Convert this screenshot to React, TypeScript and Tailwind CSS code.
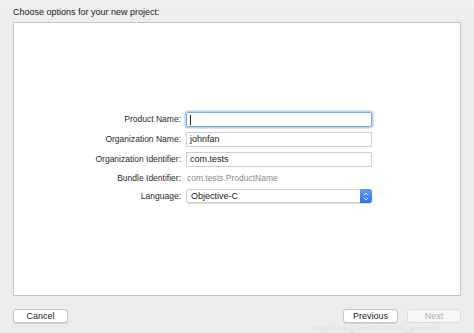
import React from "react";

const font = { fontFamily: '"Liberation Sans", Arial, sans-serif' };

function Label({ children }: { children: React.ReactNode }) {
  return (
    <div className="w-[167px] shrink-0 text-right text-[8.5px] leading-none text-[#2a2a2a]">
      {children}
    </div>
  );
}

export default function App() {
  return (
    <div
      className="relative flex h-[333px] w-[474px] flex-col overflow-hidden bg-[#ececec]"
      style={font}
    >
      <div className="h-[22px] px-[13px] pt-[8px] text-[9px] leading-none text-[#222] bg-gradient-to-b from-[#f0f0f0] to-[#ececec]">
        Choose options for your new project:
      </div>

      <div className="mx-[13px] h-[274px] border border-[#c4c4c4] bg-white">
        <div className="flex flex-col gap-[5px] pt-[89px]">
          <div className="flex h-[15px] items-center gap-[5px]">
            <Label>Product Name:</Label>
            <div className="flex h-[15px] w-[186px] items-center rounded-[2px] border border-[#7fa9e6] pl-[3px] shadow-[0_0_0_1.5px_#b7d0f3]">
              <div className="h-[10px] w-px bg-[#222]" />
            </div>
          </div>
          <div className="flex h-[15px] items-center gap-[5px]">
            <Label>Organization Name:</Label>
            <div className="flex h-[15px] w-[186px] items-center border border-[#cfcfcf] pl-[3px] text-[9px] leading-none text-[#222]">
              johnfan
            </div>
          </div>
          <div className="flex h-[15px] items-center gap-[5px]">
            <Label>Organization Identifier:</Label>
            <div className="flex h-[15px] w-[186px] items-center border border-[#cfcfcf] pl-[3px] text-[9px] leading-none text-[#222]">
              com.tests
            </div>
          </div>
          <div className="flex h-[12px] items-center gap-[5px]">
            <Label>Bundle Identifier:</Label>
            <div className="pl-[1px] text-[8.5px] leading-none text-[#8c8c8c]">
              com.tests.ProductName
            </div>
          </div>
          <div className="flex h-[14px] items-center gap-[5px]">
            <Label>Language:</Label>
            <div className="flex h-[14px] w-[186px] items-center justify-between rounded-[3px] border border-[#d0d0d0] bg-white pl-[4px] text-[9px] leading-none text-[#222] shadow-[0_1px_0_#e0e0e0]">
              <span>Objective-C</span>
              <div className="flex h-[14px] w-[12px] items-center justify-center rounded-r-[3px] bg-gradient-to-b from-[#5e9cf6] to-[#2f6ee8] -mr-px">
                <svg width="6" height="9" viewBox="0 0 6 9" fill="none">
                  <path d="M1 3.2 L3 1.2 L5 3.2" stroke="white" strokeWidth="1" />
                  <path d="M1 5.8 L3 7.8 L5 5.8" stroke="white" strokeWidth="1" />
                </svg>
              </div>
            </div>
          </div>
        </div>
      </div>

      <div className="flex items-center justify-between px-[13px] pt-[13px]">
        <button className="flex h-[14px] w-[55px] items-center justify-center rounded-[3px] border border-[#c6c6c6] bg-white text-[9px] leading-none text-[#222] shadow-[0_1px_0_#d6d6d6]">
          Cancel
        </button>
        <div className="flex gap-[9px]">
          <button className="flex h-[14px] w-[55px] items-center justify-center rounded-[3px] border border-[#c6c6c6] bg-white text-[9px] leading-none text-[#222] shadow-[0_1px_0_#d6d6d6]">
            Previous
          </button>
          <button className="flex h-[14px] w-[54px] items-center justify-center rounded-[3px] border border-[#dcdcdc] bg-[#f6f6f6] text-[9px] leading-none text-[#b0b0b0]">
            Next
          </button>
        </div>
      </div>

      <div className="pointer-events-none absolute left-[312px] top-[325px] text-[7.5px] leading-none tracking-[0.5px] text-[#e0e0e0]">
        https://blog.csdn.net/fan_johnfan1
      </div>
    </div>
  );
}
